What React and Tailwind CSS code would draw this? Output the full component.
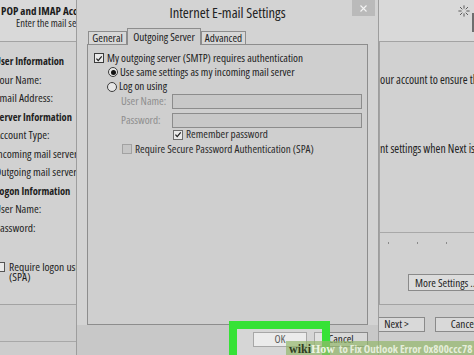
import clsx from "clsx";

function Check({ checked, muted, className }) {
    return (
        <span
            className={clsx(
                "flex shrink-0 items-center justify-center w-[10px] h-[10px] border",
                muted ? "border-[#a2a2a2] bg-[#c6c6c6]" : "border-[#3c3c3c] bg-[#e9e9e9]",
                className
            )}
        >
            {checked && (
                <svg width="9" height="9" viewBox="0 0 10 10">
                    <path d="M1.8 5.2 L4 7.6 L8.4 2.2" fill="none" stroke="#1b1b1b" strokeWidth="1.5" />
                </svg>
            )}
        </span>
    );
}

function Radio({ on }) {
    return (
        <span className="flex shrink-0 items-center justify-center w-[10px] h-[10px] rounded-full border border-[#3c3c3c] bg-[#e6e6e6]">
            {on && <span className="w-[5px] h-[5px] rounded-full bg-[#111]" />}
        </span>
    );
}

function Spinner() {
    const lines = [0, 45, 90, 135, 180, 225, 270, 315];
    return (
        <svg width="12" height="12" viewBox="0 0 12 12" className="mt-[5px]">
            {lines.map((a) => {
                const r = (a * Math.PI) / 180;
                return (
                    <line
                        key={a}
                        x1={6 + Math.cos(r) * 2.4}
                        y1={6 + Math.sin(r) * 2.4}
                        x2={6 + Math.cos(r) * 5.6}
                        y2={6 + Math.sin(r) * 5.6}
                        stroke="#5a5a5a"
                        strokeWidth="1"
                    />
                );
            })}
        </svg>
    );
}

function BackWindow() {
    const rows = [
        ["User Information", true],
        ["Your Name:", false],
        ["Email Address:", false],
        ["Server Information", true],
        ["Account Type:", false],
        ["Incoming mail server:", false],
        ["Outgoing mail server (SMTP):", false],
        ["Logon Information", true],
        ["User Name:", false],
        ["Password:", false],
    ];

    return (
        <div className="flex flex-col w-[480px] h-full -ml-[6px]">
            {/* header */}
            <div className="flex justify-between h-[42px] shrink-0 border-b border-[#a3a3a3] bg-[#d9d9d9]">
                <div className="pl-[7px] pt-[5px] leading-[12px] whitespace-nowrap">
                    <div className="font-bold text-[11px] text-[#1c1c1c]">POP and IMAP Account Settings</div>
                    <div className="pl-[15px] text-[10.5px] text-[#262626]">Enter the mail server settings for your account.</div>
                </div>
                <div className="flex items-start gap-[2px]">
                    <Spinner />
                    <span className="mt-[13px] w-[2px] h-[19px] bg-[#6e6e6e]" />
                </div>
            </div>

            {/* body */}
            <div className="flex h-[263px] shrink-0 border-b border-[#a3a3a3] bg-[#d1d1d1]">
                <div className="w-[83px] shrink-0 pl-[1px] pt-[10px] whitespace-nowrap text-[11.5px] text-[#1e1e1e]">
                    {rows.map(([label, bold]) => (
                        <div key={label} className={clsx("leading-[18.5px]", bold && "font-bold text-[10.5px]")}>
                            {label}
                        </div>
                    ))}
                    <div className="flex items-start gap-[4px] mt-[25px] leading-[10px]">
                        <Check className="border-[#555]" />
                        <span>
                            Require logon using Secure Password Authentication
                            <br />
                            (SPA)
                        </span>
                    </div>
                </div>
                <div className="flex-1" />
                <div className="w-[95px] shrink-0 border-l border-[#a3a3a3] whitespace-nowrap text-[11.7px] text-[#222] leading-[12px]">
                    <div className="pt-[31px]">our account to ensure that the entries are correct.</div>
                    <div className="mt-[57px]">nt settings when Next is clicked</div>
                    <div className="mt-[78px] border-t border-[#a8a8a8] h-[10px]" />
                    <div className="flex gap-[28px] pl-[8px]">
                        <span className="w-px h-[2px] bg-[#8a8a8a]" />
                        <span className="w-px h-[2px] bg-[#8a8a8a]" />
                        <span className="w-px h-[2px] bg-[#8a8a8a]" />
                    </div>
                    <div className="mt-[30px] ml-[28px] w-[72px] h-[17px] flex items-center pl-[6px] border border-[#8a8a8a] bg-[#dcdcdc] text-[11.2px]">
                        More Settings ...
                    </div>
                </div>
            </div>

            {/* bottom strip */}
            <div className="flex flex-1 bg-[#cdcdcd]">
                <div className="w-[83px] shrink-0 pt-[36px]">
                    <div className="border-t border-[#a8a8a8]" />
                </div>
                <div className="flex-1" />
                <div className="w-[106px] shrink-0 pt-[12px] flex gap-[10px] whitespace-nowrap text-[#222]">
                    <span className="w-[57px] h-[15px] shrink-0 flex items-center justify-center border border-[#8a8a8a] bg-[#d9d9d9]">Next &gt;</span>
                    <span className="w-[57px] h-[15px] shrink-0 flex items-center justify-center border border-[#8a8a8a] bg-[#d9d9d9]">Cancel</span>
                </div>
            </div>
        </div>
    );
}

function SettingsDialog() {
    return (
        <div className="absolute left-[76px] top-0 w-[303px] h-[370px] flex flex-col bg-[#d3d3d3] border-x border-[#9d9d9d] text-[#1c1c1c]">
            <div className="grid grid-cols-[1fr_auto_1fr] h-[26px] shrink-0">
                <div />
                <div className="self-center text-[14.5px] leading-[16px] text-[#222] whitespace-nowrap">
                    Internet E-mail Settings
                </div>
                <div className="flex justify-end items-start pr-[3px]">
                    <span className="w-[23px] h-[16px] flex items-center justify-center bg-[#bababa]">
                        <svg width="7" height="7" viewBox="0 0 7 7">
                            <path d="M0.5 0.5 L6.5 6.5 M6.5 0.5 L0.5 6.5" stroke="#f4f4f4" strokeWidth="1.1" />
                        </svg>
                    </span>
                </div>
            </div>

            <div className="px-[10px]">
                <div className="flex items-end h-[18px] pl-[1px] whitespace-nowrap">
                    <span className="w-[39px] h-[13px] flex items-center justify-center border border-b-0 border-[#8d8d8d] bg-[#d7d7d7] leading-[12px]">General</span>
                    <span className="relative z-10 w-[74px] h-[17px] -mb-px flex items-center justify-center border border-b-0 border-[#8d8d8d] bg-[#cfcfcf] leading-[12px]">Outgoing Server</span>
                    <span className="w-[45px] h-[13px] flex items-center justify-center border border-b-0 border-[#8d8d8d] bg-[#d7d7d7] leading-[12px]">Advanced</span>
                </div>

                <div className="h-[281px] border border-[#8d8d8d] bg-[#cfcfcf] pt-[6px] whitespace-nowrap">
                    <div className="flex items-center h-[14px] pl-[6px] gap-[3px]">
                        <Check checked />
                        <span>My outgoing server (SMTP) requires authentication</span>
                    </div>
                    <div className="flex items-center h-[14px] pl-[20px] gap-[2px]">
                        <Radio on />
                        <span>Use same settings as my incoming mail server</span>
                    </div>
                    <div className="flex items-center h-[15px] pl-[19px] gap-[2px]">
                        <Radio />
                        <span>Log on using</span>
                    </div>
                    <div className="flex items-center h-[15px] pl-[33px]">
                        <span className="w-[51px] text-[#8e8e8e]">User Name:</span>
                        <span className="w-[190px] h-[15px] border border-[#8c8c8c] bg-[#c8c8c8]" />
                    </div>
                    <div className="flex items-center h-[15px] mt-[4px] pl-[33px]">
                        <span className="w-[51px] text-[#8e8e8e]">Password:</span>
                        <span className="w-[190px] h-[15px] border border-[#8c8c8c] bg-[#c8c8c8]" />
                    </div>
                    <div className="flex items-center h-[13px] pl-[85px] gap-[3px]">
                        <Check checked className="border-[#6c6c6c] bg-[#dadada]" />
                        <span className="text-[#2a2a2a]">Remember password</span>
                    </div>
                    <div className="flex items-center h-[16px] pl-[34px] gap-[3px]">
                        <Check muted />
                        <span className="text-[#2a2a2a]">Require Secure Password Authentication (SPA)</span>
                    </div>
                </div>
            </div>

            <div className="flex-1 flex justify-end items-start gap-[7px] pt-[7px] pr-[10px] bg-[#c8c8c8]">
                <span className="w-[54px] h-[15px] flex items-center justify-center border border-[#8a8a8a] bg-[#e4e4e4]">OK</span>
                <span className="w-[54px] h-[15px] flex items-center justify-center border border-[#8a8a8a] bg-[#d8d8d8]">Cancel</span>
            </div>
        </div>
    );
}

export default function App() {
    return (
        <div className="relative w-[474px] h-[355px] overflow-hidden bg-[#d1d1d1] text-[11.2px] font-['Open_Sans',sans-serif] [font-stretch:75%]">
            <BackWindow />
            <SettingsDialog />

            {/* highlight around OK */}
            <div className="absolute left-[229px] top-[321px] w-[101px] h-[42px] border-[8px] border-[#36e236] bg-white/25" />

            {/* watermark */}
            <div className="absolute left-[286px] top-[341px] right-0 h-[16px] flex items-center pl-[3px] bg-[#94b86c]/70 whitespace-nowrap font-bold">
                <span className="font-['Liberation_Serif',serif] text-[12px] text-[#2f3d22]">wiki</span>
                <span className="font-['Liberation_Serif',serif] text-[12px] text-[#eef5e4]">How</span>
                <span className="ml-[4px] text-[11px] text-[#e6eedb]">to Fix Outlook Error 0x800ccc78</span>
            </div>
        </div>
    );
}
